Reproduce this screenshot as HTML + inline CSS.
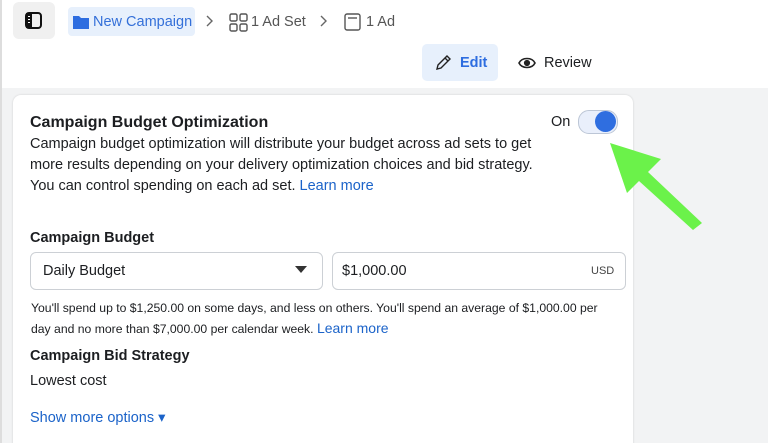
<!DOCTYPE html>
<html style="overflow:hidden;width:768px;height:443px"><head><style>
body{margin:0;width:768px;height:443px;overflow:hidden;background:#fff;font-family:"Liberation Sans",sans-serif;position:relative;color:#1c1e21}
.abs{position:absolute}
.gray{position:absolute;left:0;top:88px;width:768px;height:355px;background:#f2f3f4}
.card{position:absolute;left:13px;top:95px;width:620px;height:360px;background:#fff;border-radius:8px;box-shadow:0 0 2px rgba(0,0,0,.15)}
.t{position:absolute;font-size:14.5px;white-space:nowrap}
a{color:#1b63c9;text-decoration:none}
.box{position:absolute;border:1px solid #ccd0d5;border-radius:6px;background:#fff}
</style></head><body>
<div class="gray"></div>
<div class="card"></div>
<div class="abs" style="left:0;top:0;width:2px;height:443px;background:#ddd"></div>
<div class="abs" style="left:13px;top:2px;width:42px;height:37px;background:#f0f0f0;border-radius:6px"></div>
<svg class="abs" style="left:25px;top:12px" width="18" height="17"><rect x="1" y="1" width="15" height="15" rx="3" fill="none" stroke="#111" stroke-width="2"/><rect x="1" y="1" width="6" height="15" fill="#111"/><rect x="3" y="4" width="2" height="1" fill="#fff"/><rect x="3" y="7" width="2" height="1" fill="#fff"/><rect x="3" y="10" width="2" height="1" fill="#fff"/></svg>
<div class="abs" style="left:68px;top:7px;width:127px;height:29px;background:#e7f0fc;border-radius:4px"></div>
<svg class="abs" style="left:72px;top:14px" width="18" height="16"><path d="M1 2h6l2 2h8v11H1z" fill="#2d6de0"/></svg>
<div class="t" style="left:93px;top:14px;color:#3470d9">New Campaign</div>
<svg class="abs" style="left:206px;top:15px" width="8" height="12" fill="none" stroke="#666" stroke-width="1.4"><path d="M1 1l5 5-5 5"/></svg>
<svg class="abs" style="left:229px;top:13px" width="19" height="19" fill="none" stroke="#555" stroke-width="1.4"><rect x="1" y="1" width="7" height="7" rx="1.5"/><rect x="11" y="1" width="7" height="7" rx="1.5"/><rect x="1" y="11" width="7" height="7" rx="1.5"/><rect x="11" y="11" width="7" height="7" rx="1.5"/></svg>
<div class="t" style="left:251px;top:14px;color:#555">1 Ad Set</div>
<svg class="abs" style="left:320px;top:15px" width="8" height="12" fill="none" stroke="#666" stroke-width="1.4"><path d="M1 1l5 5-5 5"/></svg>
<svg class="abs" style="left:344px;top:13px" width="17" height="18" fill="none" stroke="#555" stroke-width="1.4"><rect x="1" y="1" width="15" height="16" rx="2"/><path d="M4 5h9"/></svg>
<div class="t" style="left:366px;top:14px;color:#555">1 Ad</div>
<div class="abs" style="left:422px;top:44px;width:76px;height:37px;background:#e7f0fc;border-radius:5px"></div>
<svg class="abs" style="left:434px;top:53px" width="18" height="19" fill="none" stroke="#222" stroke-width="1.4"><path d="M3 16l1-4L13 3l3 3-9 9z M11 5l3 3"/></svg>
<div class="t" style="left:460px;top:55px;color:#2d6de0;font-weight:bold">Edit</div>
<svg class="abs" style="left:518px;top:56px" width="18" height="14" fill="none" stroke="#222" stroke-width="1.6"><path d="M1 7C4 1 14 1 17 7C14 13 4 13 1 7z"/><circle cx="9" cy="7" r="2.3" fill="#222"/></svg>
<div class="t" style="left:544px;top:55px">Review</div>
<div class="t" style="left:30px;top:114px;font-size:16px;font-weight:bold">Campaign Budget Optimization</div>
<div class="t" style="left:30px;top:134px;line-height:21px">Campaign budget optimization will distribute your budget across ad sets to get<br>more results depending on your delivery optimization choices and bid strategy.<br>You can control spending on each ad set. <a>Learn more</a></div>
<div class="t" style="left:551px;top:114px">On</div>
<div class="abs" style="left:578px;top:110px;width:38px;height:22px;border-radius:11px;background:#e9effb;border:1px solid #bcc6d6"></div>
<div class="abs" style="left:595px;top:111px;width:21px;height:21px;border-radius:50%;background:#2f6ee0"></div>
<div class="t" style="left:30px;top:230px;font-weight:bold">Campaign Budget</div>
<div class="box" style="left:30px;top:252px;width:291px;height:36px"></div>
<div class="t" style="left:43px;top:263px">Daily Budget</div>
<svg class="abs" style="left:295px;top:266px" width="12" height="8"><path d="M0 0h12L6 7z" fill="#333"/></svg>
<div class="box" style="left:332px;top:252px;width:292px;height:36px"></div>
<div class="t" style="left:342px;top:263px">$1,000.00</div>
<div class="t" style="left:591px;top:265px;font-size:11px;color:#444">USD</div>
<div class="t" style="left:31px;top:298px;font-size:12.2px;line-height:20px">You'll spend up to $1,250.00 on some days, and less on others. You'll spend an average of $1,000.00 per<br>day and no more than $7,000.00 per calendar week. <a style="font-size:14px">Learn more</a></div>
<div class="t" style="left:30px;top:348px;font-weight:bold">Campaign Bid Strategy</div>
<div class="t" style="left:30px;top:373px">Lowest cost</div>
<div class="t" style="left:30px;top:410px;color:#1b63c9">Show more options ▾</div>
<svg class="abs" style="left:0;top:0" width="768" height="443"><path d="M610 143L661 159L648 172L702 223L693 230L639 181L627 193Z" fill="#6bf24a"/></svg>
</body></html>
